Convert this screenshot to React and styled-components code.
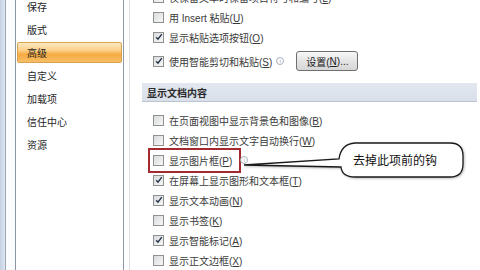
import React from 'react';
import styled, { createGlobalStyle } from 'styled-components';

const GlobalStyle = createGlobalStyle`
	html, body {
		margin: 0;
		padding: 0;
		background: #ffffff;
	}
	body {
		font-family: "Liberation Sans", "Noto Sans CJK SC", sans-serif;
	}
`;

const Page = styled.div`
	position: relative;
	display: flex;
	width: 480px;
	height: 270px;
	overflow: hidden;
	background: #ffffff;
`;

const Strip = styled.div`
	width: 5px;
	background: linear-gradient(90deg, #c3d0e2, #dfe7f2);
	border-right: 1px solid #9ba6b6;
`;

const Gutter = styled.div`
	width: 9px;
	background: #fbfcfe;
	border-right: 1px solid #8c95a2;
`;

const Nav = styled.div`
	width: 107px;
	display: flex;
	flex-direction: column;
	margin-top: -5px;
	border-right: 1px solid #8f98a6;
`;

const NavItem = styled.div`
	height: 19px;
	margin: 1px;
	padding-left: 9px;
	display: flex;
	align-items: center;
	font-size: 10px;
	color: #1e1e1e;
	border: 1px solid ${p => (p.active ? '#d9a24f' : 'transparent')};
	border-radius: 2px;
	background: ${p =>
		p.active
			? 'linear-gradient(#fde8c0 0%, #fbcf86 40%, #f6aa42 60%, #f8bf66 100%)'
			: 'transparent'};
`;

const Content = styled.div`
	flex: 1;
	margin-left: 5px;
	padding-left: 12px;
	border-left: 1px solid #dcdfe4;
	display: flex;
	flex-direction: column;
`;

const Group = styled.div`
	display: flex;
	flex-direction: column;
	margin-top: ${p => p.top || 0}px;
	padding-left: 11px;
`;

const Row = styled.div`
	height: ${p => (p.tall ? 28 : 20)}px;
	display: flex;
	align-items: center;
	font-size: 10px;
	color: #3a3a3a;
	white-space: nowrap;
`;

const Option = styled.span`
	display: inline-flex;
	align-items: center;
	gap: 5px;
	outline: ${p => (p.marked ? '2px solid #a32a30' : 'none')};
	outline-offset: 3px;
	padding-right: ${p => (p.marked ? 4 : 0)}px;
`;

const Box = styled.span`
	width: 9px;
	height: 9px;
	border: 1px solid #8f9191;
	background: linear-gradient(135deg, #d9dbdd, #f7f7f7);
	display: inline-flex;
	align-items: center;
	justify-content: center;
`;

const Key = styled.span`
	text-decoration: underline;
`;

const Info = styled.span`
	width: 6px;
	height: 6px;
	border: 1px solid #a8b0bb;
	border-radius: 50%;
	margin-left: 4px;
	font-size: 5px;
	line-height: 6px;
	text-align: center;
	color: #8a96a8;
`;

const Button = styled.div`
	margin-left: 12px;
	width: 60px;
	height: 18px;
	border: 1px solid #6f6f6f;
	border-radius: 3px;
	background: linear-gradient(#f7f7f7, #e4e4e4 50%, #d6d6d6);
	display: flex;
	align-items: center;
	justify-content: center;
	font-size: 10px;
	color: #222;
`;

const Header = styled.div`
	margin-top: 8px;
	margin-right: 3px;
	height: 21px;
	padding-left: 5px;
	display: flex;
	align-items: center;
	font-size: 10px;
	font-weight: bold;
	color: #2a2a2a;
	background: linear-gradient(#e3e8f0, #d9e0ea);
	border-bottom: 1px solid #b9c3d1;
`;

const Bubble = styled.svg`
	position: absolute;
	left: 0;
	top: 0;
	pointer-events: none;
	filter: drop-shadow(1px 1px 1px rgba(0, 0, 0, 0.25));
`;

const BubbleText = styled.div`
	position: absolute;
	left: 353px;
	top: 151px;
	font-size: 12px;
	line-height: 18px;
	color: #111;
	font-family: "Noto Sans CJK SC", sans-serif;
`;

const Check = () => (
	<svg width="8" height="8" viewBox="0 0 8 8">
		<path d="M1.2 4.2 L3 6.2 L6.8 1.2" fill="none" stroke="#243248" strokeWidth="1.4" />
	</svg>
);

const navItems = ['保存', '版式', '高级', '自定义', '加载项', '信任中心', '资源'];

const Item = ({ checked, marked, label, k, info }) => (
	<Row>
		<Option marked={marked}>
			<Box>{checked && <Check />}</Box>
			<span>
				{label}(<Key>{k}</Key>)
			</span>
		</Option>
		{info && <Info>i</Info>}
	</Row>
);

const displayItems = [
	{ label: '在页面视图中显示背景色和图像', k: 'B' },
	{ label: '文档窗口内显示文字自动换行', k: 'W' },
	{ label: '显示图片框', k: 'P', marked: true },
	{ label: '在屏幕上显示图形和文本框', k: 'T', checked: true },
	{ label: '显示文本动画', k: 'N', checked: true },
	{ label: '显示书签', k: 'K' },
	{ label: '显示智能标记', k: 'A', checked: true },
	{ label: '显示正文边框', k: 'X' }
];

const App = () => (
	<Page>
		<GlobalStyle />
		<Strip />
		<Gutter />
		<Nav>
			{navItems.map(n => (
				<NavItem key={n} active={n === '高级'}>
					{n}
				</NavItem>
			))}
		</Nav>
		<Content>
			<Group top={-13}>
				<Item label="仅保留文本时保留项目符号和编号" k="L" />
				<Item label="用 Insert 粘贴" k="U" />
				<Item label="显示粘贴选项按钮" k="O" checked />
				<Row tall>
					<Option>
						<Box>
							<Check />
						</Box>
						<span>
							使用智能剪切和粘贴(<Key>S</Key>)
						</span>
					</Option>
					<Info>i</Info>
					<Button>
						设置(<Key>N</Key>)...
					</Button>
				</Row>
			</Group>
			<Header>显示文档内容</Header>
			<Group top={8}>
				{displayItems.map(d => (
					<Item key={d.k} {...d} info={d.marked} />
				))}
			</Group>
		</Content>
		<Bubble width="480" height="270" viewBox="0 0 480 270">
			<path
				d="M244 165 L339 159 Q341 144 355 143 L450 143 Q463 143 463 156 L463 164 Q463 177 450 177 L355 177 Q342 177 341 167 Z"
				fill="#ffffff"
				stroke="#1a1a1a"
				strokeWidth="1.3"
			/>
		</Bubble>
		<BubbleText>去掉此项前的钩</BubbleText>
	</Page>
);

export default App;
